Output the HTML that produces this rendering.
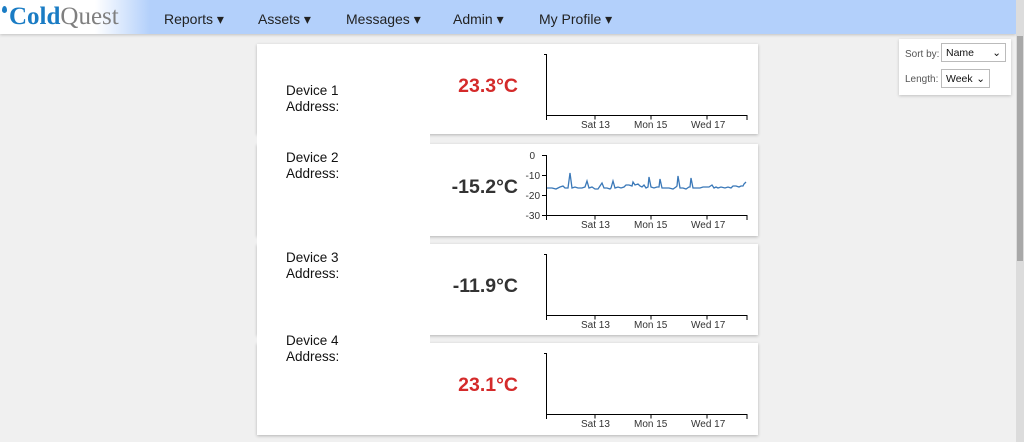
<!DOCTYPE html>
<html><head><meta charset="utf-8"><style>
*{margin:0;padding:0;box-sizing:border-box}
body{width:1024px;height:442px;background:#f0f0f0;font-family:"Liberation Sans",sans-serif;position:relative;overflow:hidden}
.nav{position:absolute;left:0;top:0;width:1016px;height:34px;background:#b3d0fb;box-shadow:0 1px 3px rgba(0,0,0,.2)}
.logo{position:absolute;left:0;top:0;width:150px;height:34px;background:linear-gradient(90deg,#fff 0,#fff 95px,#b3d0fb 150px)}
.logo span{position:absolute;left:9px;top:3px;font-family:"Liberation Serif",serif;font-size:25px;color:#7f7f7f}
.logo b{color:#1a7cc4}
.drop{position:absolute;left:2px;top:6px;width:5px;height:7px;background:#1a7cc4;border-radius:50% 50% 50% 50%/60% 60% 40% 40%}
.nav a{position:absolute;top:11px;font-size:14px;color:#222}
.sb{position:absolute;right:0;top:0;width:8px;height:442px;background:#dcdcdc}
.sb i{position:absolute;left:1px;top:36px;width:6px;height:225px;background:#a8a8a8}
.card{position:absolute;left:257px;width:501px;background:#fff;box-shadow:0 1px 3px rgba(0,0,0,.25)}
.panel{position:absolute;left:257px;width:173px;background:#fff}
.dev{position:absolute;left:286px;font-size:13.5px;color:#111;line-height:16px}
.t{position:absolute;right:506px;font-size:19.5px;font-weight:bold}
.red{color:#d42a2a}.blk{color:#333}
svg{position:absolute;left:525px;font-family:"Liberation Sans",sans-serif;font-size:10px}
.ctl{position:absolute;left:899px;top:39px;width:112px;height:56px;background:#fff;box-shadow:0 1px 3px rgba(0,0,0,.2);font-size:10px;color:#555}
.sel{position:absolute;border:1px solid #bbb;height:19px;font-size:10.5px;color:#111;padding:3px 4px}
</style></head><body>
<div class="nav"><div class="logo"><div class="drop"></div><span><b>Cold</b>Quest</span></div>
<a style="left:164px">Reports ▾</a><a style="left:258px">Assets ▾</a><a style="left:346px">Messages ▾</a><a style="left:453px">Admin ▾</a><a style="left:539px">My Profile ▾</a></div>
<div class="sb"><i></i></div>
<div class="card" style="top:44px;height:90px"></div>
<div class="card" style="top:144px;height:92px"></div>
<div class="card" style="top:244px;height:91px"></div>
<div class="card" style="top:343px;height:92px"></div>
<div class="panel" style="top:130px;height:14px"></div>
<div class="panel" style="top:236px;height:8px"></div>
<div class="panel" style="top:333px;height:10px"></div>
<div class="dev" style="top:83px">Device 1<br>Address:</div>
<div class="dev" style="top:150px">Device 2<br>Address:</div>
<div class="dev" style="top:250px">Device 3<br>Address:</div>
<div class="dev" style="top:333px">Device 4<br>Address:</div>
<div class="t red" style="top:75px">23.3°C</div>
<div class="t blk" style="top:176px">-15.2°C</div>
<div class="t blk" style="top:275px">-11.9°C</div>
<div class="t red" style="top:374px">23.1°C</div>

<svg style="top:50px" width="230" height="80"><g stroke="#000" fill="none"><path d="M19 4.5H21.5V65.5H222V70"/><path d="M21.5 65.5V70"/><path d="M70 65.5v4M126 65.5v4M182 65.5v4"/></g><g fill="#333"><text x="56" y="78">Sat 13</text><text x="109" y="78">Mon 15</text><text x="166" y="78">Wed 17</text></g></svg>
<svg style="top:150px" width="230" height="80"><g stroke="#000" fill="none"><path d="M17 5.5H21.5V65.5H222V70"/><path d="M21.5 65.5V70M17 25.5h4M17 45.5h4M17 65.5h4"/><path d="M70 65.5v4M126 65.5v4M182 65.5v4"/></g>
<polyline fill="none" stroke="#3a78b8" stroke-width="1.3" points="22,38 27,38 31,39 35,37 38,36 40,38 43,38 45,23 47,38 50,37 53,38 57,38 60,37 62,31 64,38 67,37 70,39 73,39 75,36 77,33 79,38 82,38 85,39 86,38 88,31 90,38 93,37 96,38 99,37 101,35 104,35 107,36 108,32 110,35 113,34 115,36 117,37 119,35 121,38 123,37 124,27 126,37 129,38 132,37 134,37 135,29 137,38 140,38 144,38 148,39 151,37 152,36 153,26 155,38 158,38 161,39 164,37 165,37 166,28 168,38 171,38 175,38 178,37 181,37 184,37 187,35 189,38 191,37 193,38 196,37 200,38 203,37 206,38 208,36 211,36 214,37 216,36 218,36 219,34 221,32"/>
<g fill="#333"><text x="10" y="9" text-anchor="end">0</text><text x="15" y="29" text-anchor="end">-10</text><text x="15" y="49" text-anchor="end">-20</text><text x="15" y="69" text-anchor="end">-30</text><text x="56" y="78">Sat 13</text><text x="109" y="78">Mon 15</text><text x="166" y="78">Wed 17</text></g></svg>
<svg style="top:250px" width="230" height="80"><g stroke="#000" fill="none"><path d="M19 4.5H21.5V65.5H222V70"/><path d="M21.5 65.5V70"/><path d="M70 65.5v4M126 65.5v4M182 65.5v4"/></g><g fill="#333"><text x="56" y="78">Sat 13</text><text x="109" y="78">Mon 15</text><text x="166" y="78">Wed 17</text></g></svg>
<svg style="top:349px" width="230" height="80"><g stroke="#000" fill="none"><path d="M19 4.5H21.5V65.5H222V70"/><path d="M21.5 65.5V70"/><path d="M70 65.5v4M126 65.5v4M182 65.5v4"/></g><g fill="#333"><text x="56" y="78">Sat 13</text><text x="109" y="78">Mon 15</text><text x="166" y="78">Wed 17</text></g></svg>

<div class="ctl"><span style="position:absolute;left:6px;top:10px">Sort by:</span><div class="sel" style="left:42px;top:4px;width:65px">Name<span style="position:absolute;right:4px">⌄</span></div>
<span style="position:absolute;left:6px;top:35px">Length:</span><div class="sel" style="left:42px;top:30px;width:49px">Week<span style="position:absolute;right:4px">⌄</span></div></div>
</body></html>
